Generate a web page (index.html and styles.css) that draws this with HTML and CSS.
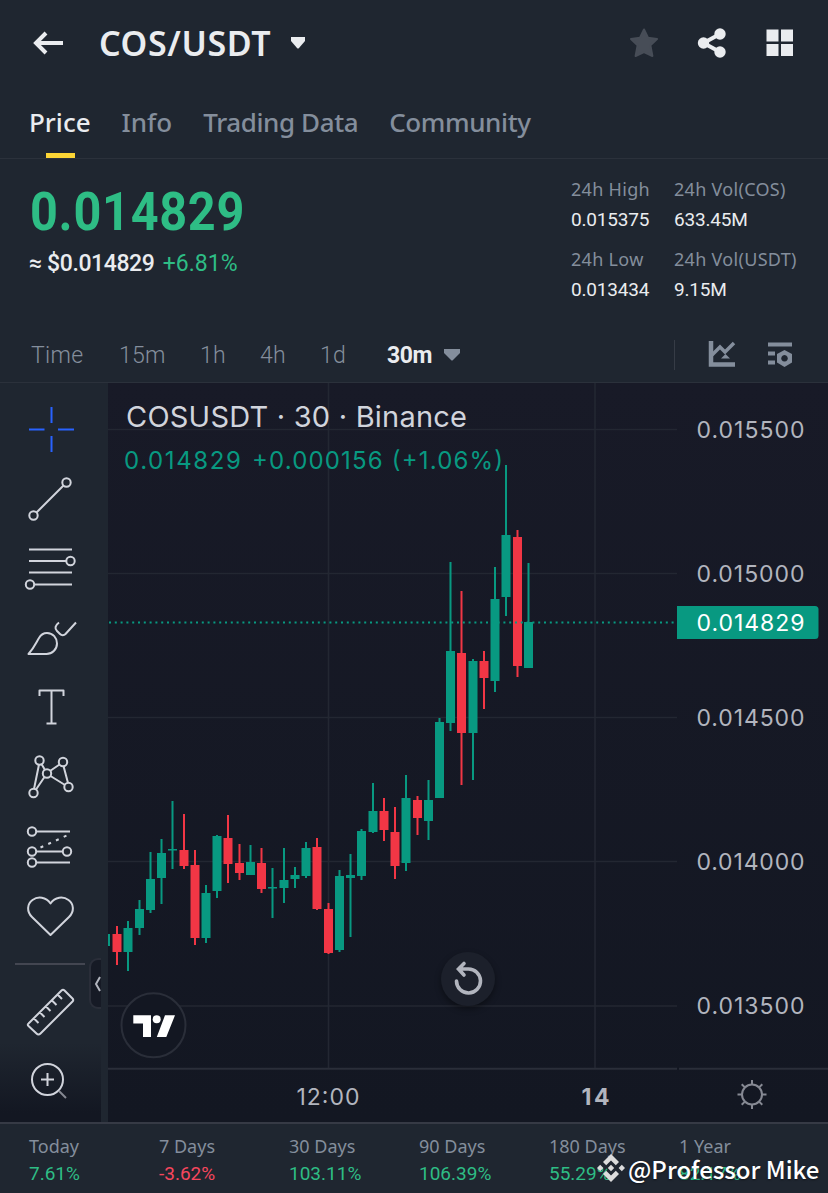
FILE: index.html
```html
<!DOCTYPE html>
<html lang="en">
<head>
  <meta charset="UTF-8" />
  <meta name="viewport" content="width=device-width, initial-scale=1" />
  <title>COS/USDT</title>
  <link rel="stylesheet" href="styles.css">
</head>
<body>
  <header class="topbar">
    <svg class="back" width="32" height="26" viewBox="0 0 32 26"><path d="M30 13H4M13 3L3 13l10 10" /></svg>
    <h1>COS/USDT</h1>
    <svg class="caret" width="16" height="12" viewBox="0 0 16 12"><path d="M1 0h14v4L9 11q-1 1-2 0L1 4z" /></svg>
    <div class="actions">
      <svg width="30" height="32" viewBox="0 0 30 32"><path class="star" d="M15 2.500l4 8.200 9 1.300-6.600 6.400 2 10.600L15 25.200l-8.400 3.800 2-10.600L2 12l9-1.300z" /></svg>
      <svg width="30" height="32" viewBox="0 0 30 32"><path class="link" d="M23 7L6.500 16 23 25" /><g class="solid"><circle cx="23" cy="7" r="5.700" /><circle cx="6.500" cy="16" r="5.700" /><circle cx="23" cy="25" r="5.700" /></g></svg>
      <svg width="28" height="28" viewBox="0 0 28 28"><path class="solid" d="M.5.5h12v12H.5zM15 .5h12v12H15zM.5 15h12v12H.5zM15 15h12v12H15z" /></svg>
    </div>
  </header>

  <nav class="tabs">
    <a class="tab active">Price</a>
    <a class="tab">Info</a>
    <a class="tab long">Trading Data</a>
    <a class="tab long">Community</a>
  </nav>

  <section class="summary">
    <div class="price">
      <div class="last"><span>0.014829</span></div>
      <div class="fiat">≈ $0.014829 <span>+6.81%</span></div>
    </div>
    <dl class="stats">
      <div><dt>24h High</dt><dd>0.015375</dd></div>
      <div><dt>24h Vol(COS)</dt><dd>633.45M</dd></div>
      <div><dt>24h Low</dt><dd>0.013434</dd></div>
      <div><dt>24h Vol(USDT)</dt><dd>9.15M</dd></div>
    </dl>
  </section>

  <div class="intervals">
    <span class="i-time">Time</span>
    <span class="i-15">15m</span>
    <span class="i-1h">1h</span>
    <span class="i-4h">4h</span>
    <span class="i-1d">1d</span>
    <b>30m</b>
    <svg class="caret" width="16" height="12" viewBox="0 0 16 12"><path d="M0 0h16v4L9 11q-1 1-2 0L0 4z" /></svg>
    <div class="chart-actions">
      <svg width="28" height="28" viewBox="0 0 28 28"><path d="M3 0v23.500h24" stroke-width="4.500" /><path d="M4 14l8-8 5 5 9-9" stroke-width="3.500" /><path class="fill" d="M13 17.500h9L17.500 13z" /></svg>
      <svg width="26" height="28" viewBox="0 0 26 28"><path d="M1 3.500h24M1 12.500h7M1 21.500h7" stroke-width="4" /><path class="fill" fill-rule="evenodd" d="M17.500 9l7.500 4v8.500l-7.500 4.500-7.500-4.500V13zM17.500 14a3.300 3.300 0 1 0 .01 0z" /></svg>
    </div>
  </div>

  <main class="workspace">
    <aside class="tools">
      <svg class="cross" viewBox="0 0 60 60"><path d="M30.500 8v16M30.500 37v16M8 30.500h15.500M37 30.500h16" /></svg>
      <svg viewBox="0 0 60 60"><path d="M15.500 43.500l27-27" /><circle cx="45.500" cy="13.500" r="4.200" /><circle cx="12.500" cy="46.500" r="4.200" /></svg>
      <svg viewBox="0 0 60 60"><path d="M8 11.500h43M8 23h37.500M8 34.500h43M13 46.500h38" /><circle cx="49.500" cy="23" r="4.200" /><circle cx="9" cy="46.500" r="4.200" /></svg>
      <svg viewBox="0 0 60 60"><path d="M7.500 46C13 40 15 35 18 30c2-3.500 5-5 8-5 6 0 10 5 10 10.500 0 6-5 10.500-10.500 10.500zM38 14.500c-4 3-4.500 6-2 8.500l3 3c1.500 1.500 4 1.500 5.500 0L55 14.500" /></svg>
      <svg viewBox="0 0 60 60"><path d="M18.500 19v-5.500h24V19M30.500 13.500v33M25.500 46.500h10" /></svg>
      <svg viewBox="0 0 60 60"><path d="M18 17.500L13 42M20.500 17l3.500 6M29 24l9.500-6.500M23.500 30L15 42.500M42.500 19L47 36M29.500 29l14.500 9" /><circle cx="18.500" cy="13.500" r="4.200" /><circle cx="42" cy="15" r="4.200" /><circle cx="26" cy="26.500" r="4.200" /><circle cx="12.500" cy="46" r="4.200" /><circle cx="47.500" cy="40" r="4.200" /></svg>
      <svg viewBox="0 0 60 60"><path d="M15 14.500h34M15 34.500h27M15 45.500h34" /><path d="M19.500 30.500L47 18" stroke-dasharray="3 5.500" /><circle cx="11" cy="14.500" r="4.200" /><circle cx="11" cy="34.500" r="4.200" /><circle cx="46" cy="34.500" r="4.200" /><circle cx="11" cy="45.500" r="4.200" /></svg>
      <svg viewBox="0 0 60 60"><path d="M29.500 49L11 31C5.500 25.500 6 18 11.500 14 17 10 25 11 29.500 17.500 34 11 42 10 47.500 14c5.500 4 6 11.500.5 17z" /></svg>
      <hr>
      <svg viewBox="0 0 60 60"><path d="M7.500 41.500L40.500 8.500q1.500-1.500 3 0l8 8q1.500 1.500 0 3l-32 32q-2 2-4 0l-8-7.500q-1.500-1.300 0-2.500zM13 36.500l4.500 4.500M19 30.500l4.500 4.500M25 24.500l4.500 4.500M31 18.500l4.500 4.500M36.500 12.500l4.500 4.500" /></svg>
      <svg viewBox="0 0 60 60"><circle cx="26.500" cy="27.500" r="15.500" /><path d="M26.500 21v13M20 27.500h13" /><path class="handle" d="M38 39l7 7" /></svg>
      <div class="collapse"><svg width="8" height="18" viewBox="0 0 8 18"><path d="M7 2L3 9l4 7" /></svg></div>
    </aside>

    <div class="chart">
      <svg id="chart" width="720" height="739" viewBox="108 383 720 739">
        <path class="grid" d="M108 429.500h569M108 573.500h569M108 717.500h569M108 861.500h569M108 1006h569M328.500 383v685M595 383v685" />
        <path class="axis" d="M108 1068.800h569M679 1068.800h149" />
        <g id="candles"></g>
        <path class="last-line" d="M109 622.500h568" />
        <text class="symbol" x="126" y="426.500" textLength="341">COSUSDT · 30 · Binance</text>
        <text class="change" x="124" y="468.500" textLength="117">0.014829</text>
        <text class="change" x="252" y="468.500" textLength="251">+0.000156 (+1.06%)</text>
        <g class="scale">
          <text x="696.500" y="437.500" textLength="108">0.015500</text>
          <text x="696.500" y="581.500" textLength="108">0.015000</text>
          <text x="696.500" y="725.500" textLength="108">0.014500</text>
          <text x="696.500" y="869.500" textLength="108">0.014000</text>
          <text x="696.500" y="1014" textLength="108">0.013500</text>
          <text x="296.500" y="1105" textLength="63">12:00</text>
          <text class="day" x="581.500" y="1105" textLength="28">14</text>
        </g>
        <path class="tag" d="M677 606h138q3.500 0 3.500 3.500v26q0 3.500-3.500 3.500H677z" />
        <text class="tag-text" x="696.500" y="631" textLength="108">0.014829</text>
        <g class="gear"><circle cx="752" cy="1094.500" r="10" /><path d="M752 1080v4.500M752 1104.500v4.500M737.500 1094.500h4.500M762 1094.500h4.500M741.700 1084.200l3.200 3.200M759.100 1101.600l3.200 3.200M741.700 1104.800l3.200-3.200M759.100 1087.400l3.200-3.200" /></g>
        <g class="tv"><circle cx="153.500" cy="1025.300" r="32" /><path d="M133.300 1015.300h17.700v21.700h-8v-13.500h-9.700zM165 1015.300h10l-8.700 21.700h-9.500z" /><circle class="dot" cx="156.700" cy="1019.300" r="4" /></g>
        <g class="reset"><circle cx="468" cy="979" r="27" /><path d="M456.500 981a12 12 0 1 0 11.500-12h-8M464 963.500l-5.500 5.500 5.500 6" /></g>
      </svg>
    </div>
  </main>

  <footer class="periods">
    <div><span>Today</span><b>7.61%</b></div>
    <div><span>7 Days</span><b class="down">-3.62%</b></div>
    <div><span>30 Days</span><b>103.11%</b></div>
    <div><span>90 Days</span><b>106.39%</b></div>
    <div><span>180 Days</span><b>55.29%</b></div>
    <div><span>1 Year</span><b>82.17%</b></div>
  </footer>

  <div class="author">
    <svg width="28" height="28" viewBox="0 0 28 28"><path d="M14 0l8 8-3.200 3.200L14 6.400l-4.800 4.800L6 8zM14 28l-8-8 3.200-3.200 4.800 4.800 4.800-4.800L22 20zM14 10.800l3.200 3.200-3.200 3.200-3.200-3.200zM3.200 10.800L6.400 14l-3.200 3.200L0 14zM24.800 10.800L28 14l-3.200 3.200-3.200-3.200z" /></svg>
    <span>@Professor Mike</span>
  </div>

  <script src="chart.js"></script>
</body>
</html>
```
FILE: styles.css
```css
* {
  box-sizing: border-box;
}

body {
  margin: 0;
  width: 828px;
  height: 1193px;
  position: relative;
  overflow: hidden;
  background: #1f2630;
  color: #eaecef;
  font-family: Roboto, "Liberation Sans", sans-serif;
}

svg {
  display: block;
  flex-shrink: 0;
}

/* header */
.topbar {
  height: 86px;
  padding: 0 34px 1px 33px;
  display: flex;
  align-items: center;
}

.back {
  fill: none;
  stroke: #eaecef;
  stroke-width: 4;
}

.topbar h1 {
  margin: 0 0 0 34px;
  width: 191px;
  font-family: "Noto Sans", sans-serif;
  font-size: 34px;
  font-weight: 600;
  letter-spacing: 0.6px;
}

.topbar .caret {
  fill: #eaecef;
}

.actions {
  margin-left: auto;
  display: flex;
  align-items: center;
  gap: 38px;
}

.actions svg:nth-child(-n+2) {
  margin-left: -1px;
  margin-right: 1px;
}

.solid {
  fill: #eaecef;
}

.star {
  fill: #474d57;
  stroke: #474d57;
  stroke-width: 2;
  stroke-linejoin: round;
}

.link {
  fill: none;
  stroke: #eaecef;
  stroke-width: 4;
}

/* tabs */
.tabs {
  height: 73px;
  padding-left: 29px;
  display: flex;
  gap: 31px;
  border-bottom: 1px solid #2b313b;
}

.tab {
  position: relative;
  height: 72px;
  line-height: 72px;
  font-family: "Noto Sans", sans-serif;
  font-size: 26px;
  font-weight: 500;
  color: #848e9c;
  white-space: nowrap;
}

.tab.long {
  letter-spacing: -0.4px;
}

.tab.active {
  color: #eaecef;
}

.tab.active::after {
  content: "";
  position: absolute;
  left: 17px;
  bottom: 0;
  width: 29px;
  height: 5px;
  background: #fcd535;
}

/* price summary */
.summary {
  height: 169px;
  display: flex;
}

.price {
  width: 571px;
  padding: 19px 0 0 30px;
}

.last {
  height: 69px;
  line-height: 68px;
  font-size: 54px;
  font-weight: 700;
  color: #2ebd85;
}

.last span {
  display: inline-block;
  transform: scaleX(0.9);
  transform-origin: left;
  letter-spacing: 0.8px;
}

.fiat {
  height: 34px;
  line-height: 34px;
  margin-left: -1px;
  font-size: 23px;
  font-weight: 500;
  letter-spacing: -0.4px;
}

.fiat span {
  margin-left: 3px;
  color: #2ebd85;
  font-weight: 400;
  letter-spacing: 0;
}

.stats {
  margin: 14px 0 0;
  display: grid;
  grid-template-columns: 103px 140px;
  grid-auto-rows: 70px;
}

.stats dt {
  height: 33px;
  line-height: 33px;
  font-family: "Noto Sans", sans-serif;
  font-size: 18px;
  letter-spacing: 0.3px;
  color: #848e9c;
}

.stats dd {
  margin: 0;
  line-height: 28px;
  font-size: 19px;
  letter-spacing: -0.2px;
}

/* intervals */
.intervals {
  height: 55px;
  padding: 0 35px 0 31px;
  display: flex;
  align-items: center;
  border-bottom: 1px solid #2b313b;
  font-size: 23px;
  color: #848e9c;
}

.intervals span {
  font-weight: 300;
  letter-spacing: 0.3px;
}

.i-time {
  width: 88px;
}

.i-15 {
  width: 81px;
}

.i-1h,
.i-4h {
  width: 60px;
}

.i-1d {
  width: 67px;
}

.intervals b {
  width: 57px;
  color: #eaecef;
  letter-spacing: -0.5px;
}

.intervals .caret {
  fill: #848e9c;
}

.chart-actions {
  height: 30px;
  margin-left: auto;
  padding-left: 33px;
  display: flex;
  align-items: center;
  gap: 31px;
  border-left: 1px solid #363c46;
  fill: none;
  stroke: #848e9c;
}

.chart-actions .fill {
  fill: #848e9c;
  stroke: none;
}

/* drawing tools */
.workspace {
  height: 739px;
  display: flex;
}

.tools {
  position: relative;
  width: 108px;
  padding-top: 11px;
  border-right: 7px solid #1f2630;
  background: linear-gradient(#1f2630 660px, #131722 730px);
}

.tools > svg {
  width: 60px;
  height: 60px;
  margin: 5px 0 9.600px 21px;
  fill: none;
  stroke: #d1d4dc;
  stroke-width: 2;
  stroke-linejoin: round;
}

.tools .cross {
  stroke: #2962ff;
}

.tools .handle {
  stroke: #868993;
}

.tools hr {
  width: 70px;
  height: 2px;
  margin: 17px 0 17px 15px;
  border: 0;
  background: #434651;
}

.collapse {
  position: absolute;
  left: 89px;
  top: 575px;
  width: 12px;
  height: 51px;
  padding: 15px 0 0 2px;
  border: 2px solid #2a2e39;
  border-right: 0;
  border-radius: 9px 0 0 9px;
  background: #161a25;
  fill: none;
  stroke: #b2b5be;
  stroke-width: 2;
}

/* chart */
.chart {
  width: 720px;
  background: linear-gradient(#181a27, #131722);
  font-family: Inter, "Liberation Sans", sans-serif;
}

.grid {
  fill: none;
  stroke: #232732;
  stroke-width: 1.600;
}

.axis {
  stroke: #2a2e39;
  stroke-width: 2;
}

.up {
  fill: #089981;
}

.down {
  fill: #f23645;
}

.last-line {
  stroke: #089981;
  stroke-width: 2;
  stroke-dasharray: 2 3.800;
}

.symbol {
  font-size: 29px;
  fill: #d1d4dc;
}

.change {
  font-size: 24px;
  fill: #089981;
}

.scale {
  font-size: 23px;
  fill: #b2b5be;
}

.day {
  font-weight: 700;
}

.tag {
  fill: #089981;
}

.tag-text {
  font-size: 23px;
  fill: #fff;
}

.gear {
  fill: none;
  stroke: #868993;
  stroke-width: 2;
}

.tv {
  fill: #fff;
}

.tv circle:first-child {
  fill: #131722;
  stroke: #2a2e39;
  stroke-width: 2;
}

.reset circle {
  fill: #1c202b;
  filter: drop-shadow(0 3px 3px rgba(0, 0, 0, 0.4));
}

.reset path {
  fill: none;
  stroke: #b2b5be;
  stroke-width: 3.600;
  stroke-linecap: round;
}

/* period changes */
.periods {
  height: 71px;
  padding: 8px 0 0 29px;
  display: grid;
  grid-template-columns: repeat(6, 130px);
  border-top: 2px solid #363a45;
}

.periods span,
.periods b {
  display: block;
  height: 27px;
  line-height: 29px;
  font-size: 19px;
  font-weight: 400;
}

.periods span {
  font-family: "Noto Sans", sans-serif;
  font-size: 18px;
  color: #848e9c;
}

.periods b {
  color: #2ebd85;
}

.periods b.down {
  color: #f6465d;
}

.author {
  position: absolute;
  left: 597px;
  top: 1150px;
  height: 36px;
  display: flex;
  align-items: center;
  gap: 3px;
  color: #fff;
  font-family: "Noto Sans CJK SC", sans-serif;
  font-size: 24px;
  font-weight: 500;
  text-shadow: 0 1px 2px rgba(0, 0, 0, 0.5);
}

.author svg {
  fill: #dcdcdc;
}
```
FILE: chart.js
```js
// [x, body top, body bottom, high, low, direction]
const candles = [
  [105.5, 934, 946, 934, 946, "up"],
  [117, 934, 952, 926, 965, "down"],
  [128, 928, 952, 921, 971, "up"],
  [139.5, 909, 928, 900, 935, "up"],
  [150.5, 879, 910, 852, 913, "up"],
  [161.5, 853, 878, 839, 904, "up"],
  [172.5, 849, 850.5, 801, 869, "up"],
  [184, 850, 866, 814, 869, "down"],
  [195, 865, 938, 850, 945, "down"],
  [206, 893, 938, 885, 943, "up"],
  [217, 836, 891, 835, 898, "up"],
  [228, 838, 864, 815, 883, "down"],
  [239.5, 863, 873, 844, 880, "down"],
  [250.5, 862, 875, 845, 875, "up"],
  [261.5, 863, 889, 848, 893, "down"],
  [272.5, 887, 888.5, 868, 918, "up"],
  [284, 880, 888, 848, 903, "up"],
  [295, 875, 879, 867, 888, "up"],
  [306, 848, 876, 842, 878, "up"],
  [317, 847, 909, 838, 910, "down"],
  [328.5, 909, 953, 903, 954, "down"],
  [339.5, 876, 950, 870, 952, "up"],
  [350.5, 875, 878, 854, 937, "up"],
  [361.5, 831, 876, 829, 880, "up"],
  [373, 811, 832, 783, 833, "up"],
  [384, 811, 830, 798, 841, "down"],
  [395, 832, 866, 807, 879, "down"],
  [406, 798, 863, 775, 871, "up"],
  [417.5, 800, 818, 796, 835, "down"],
  [428.5, 800, 821, 780, 840, "up"],
  [439.5, 722, 798, 718, 798, "up"],
  [450.5, 651, 723, 562, 731, "up"],
  [461.5, 653, 733, 591, 785, "down"],
  [473, 661, 733, 659, 780, "up"],
  [484, 661, 678, 651, 709, "down"],
  [495, 599, 681, 567, 692, "up"],
  [506, 535, 597, 465, 616, "up"],
  [517.5, 537, 666, 530, 677, "down"],
  [528.5, 622, 668, 563, 668, "up"]
];

const group = document.getElementById("candles");

function addRect(x, y, width, height, direction) {
  const rect = document.createElementNS("http://www.w3.org/2000/svg", "rect");
  rect.setAttribute("x", x);
  rect.setAttribute("y", y);
  rect.setAttribute("width", width);
  rect.setAttribute("height", height);
  rect.setAttribute("class", direction);
  group.appendChild(rect);
}

candles.forEach(function ([x, top, bottom, high, low, direction]) {
  addRect(x - 1, high, 2, low - high, direction);
  addRect(x - 4.5, top, 9, bottom - top, direction);
});
```
